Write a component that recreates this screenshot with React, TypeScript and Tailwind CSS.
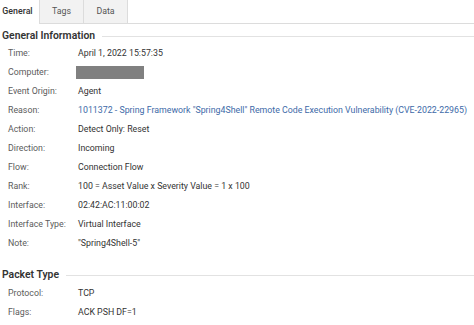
const rows1: [string, string][] = [
  ["Time:", "April 1, 2022 15:57:35"],
  ["Computer:", ""],
  ["Event Origin:", "Agent"],
  ["Reason:", "1011372 - Spring Framework \"Spring4Shell\" Remote Code Execution Vulnerability (CVE-2022-22965)"],
  ["Action:", "Detect Only: Reset"],
  ["Direction:", "Incoming"],
  ["Flow:", "Connection Flow"],
  ["Rank:", "100 = Asset Value x Severity Value = 1 x 100"],
  ["Interface:", "02:42:AC:11:00:02"],
  ["Interface Type:", "Virtual Interface"],
  ["Note:", "\"Spring4Shell-5\""],
];

const rows2: [string, string][] = [
  ["Protocol:", "TCP"],
  ["Flags:", "ACK PSH DF=1"],
];

function Row({ label, value }: { label: string; value: string }) {
  return (
    <div className="flex h-[19px] items-center">
      <div className="w-[78px] shrink-0 whitespace-nowrap pl-[8px] text-[#5c5c5c]">{label}</div>
      {label === "Computer:" ? (
        <div className="-ml-[2px] h-[13px] w-[68px] bg-[#808080]" />
      ) : label === "Reason:" ? (
        <div className="whitespace-nowrap text-[#3d6aa8]">{value}</div>
      ) : (
        <div className="whitespace-nowrap text-[#333]">{value}</div>
      )}
    </div>
  );
}

function Section({ title }: { title: string }) {
  return (
    <div className="flex h-[16px] items-center pl-[2px]">
      <span className="text-[10.4px] font-semibold text-[#333]">{title}</span>
      <div className="ml-[7px] h-px flex-1 bg-[#e2e2e2]" />
    </div>
  );
}

export default function App() {
  return (
    <div className="h-[325px] w-[474px] overflow-hidden bg-white text-[8.8px] font-['Roboto',sans-serif]">
      <div className="flex h-[24px]">
        <div className="-ml-[4px] flex h-[24px] w-[44px] items-center justify-center border-r border-[#dcdcdc] bg-white font-medium text-[#333]">
          General
        </div>
        <div className="flex h-[24px] w-[44px] items-center justify-center border-b border-r border-[#dcdcdc] bg-[#f2f2f2] text-[#555]">
          Tags
        </div>
        <div className="flex h-[24px] w-[44px] items-center justify-center border-b border-r border-[#dcdcdc] bg-[#f2f2f2] text-[#555]">
          Data
        </div>
        <div className="flex-1 border-b border-[#dcdcdc]" />
      </div>
      <div className="pt-[4px]">
        <Section title="General Information" />
        <div>
          {rows1.map(([l, v]) => (
            <Row key={l} label={l} value={v} />
          ))}
        </div>
        <div className="pt-[14px]">
          <Section title="Packet Type" />
        </div>
        <div className="pt-[1px]">
          {rows2.map(([l, v]) => (
            <Row key={l} label={l} value={v} />
          ))}
        </div>
      </div>
    </div>
  );
}
